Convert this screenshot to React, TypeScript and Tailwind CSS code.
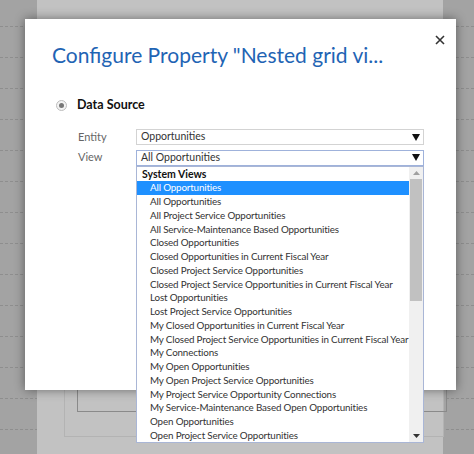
import React from "react"

const views = [
  "All Opportunities",
  "All Project Service Opportunities",
  "All Service-Maintenance Based Opportunities",
  "Closed Opportunities",
  "Closed Opportunities in Current Fiscal Year",
  "Closed Project Service Opportunities",
  "Closed Project Service Opportunities in Current Fiscal Year",
  "Lost Opportunities",
  "Lost Project Service Opportunities",
  "My Closed Opportunities in Current Fiscal Year",
  "My Closed Project Service Opportunities in Current Fiscal Year",
  "My Connections",
  "My Open Opportunities",
  "My Open Project Service Opportunities",
  "My Project Service Opportunity Connections",
  "My Service-Maintenance Based Open Opportunities",
  "Open Opportunities",
  "Open Project Service Opportunities",
]

function Arrow() {
  return (
    <svg width="8" height="7" viewBox="0 0 8 7" className="shrink-0">
      <path d="M0 0 H8 L4 7 Z" fill="#111" />
    </svg>
  )
}

export default function App() {
  return (
    <div
      className="relative w-[474px] h-[454px] overflow-hidden bg-[#a3a3a3]"
      style={{ fontFamily: 'Lato, "Open Sans", sans-serif' }}
    >
      {/* background page */}
      <div className="absolute inset-0 flex flex-col gap-[30px] pt-[26px]">
        {[0, 1, 2, 3, 4, 5, 6, 7, 8, 9, 10, 11, 12, 13].map((i) => (
          <div key={i} className="border-t border-dashed border-[#8e8e8e]" />
        ))}
      </div>
      <div className="absolute top-0 bottom-0 left-[37px] w-[406px] bg-[#c2c2c2]">
        <div className="absolute left-[27px] top-[300px] w-[380px] h-[137px] border border-[#b3b3b3]" />
        <div className="absolute left-[40px] top-[300px] w-[370px] h-[112px] border border-[#8a8a8a]" />
      </div>

      {/* dialog */}
      <div className="absolute left-[25px] top-[19px] w-[431px] h-[371px] bg-white shadow-[0_0_10px_rgba(0,0,0,0.45)]">
        <button className="absolute right-[11px] top-[16px] text-[#333]">
          <svg width="10" height="10" viewBox="0 0 10 10">
            <path d="M1 1 L9 9 M9 1 L1 9" stroke="#333" strokeWidth="1.6" />
          </svg>
        </button>

        <h1 className="pl-[27px] pt-[21px] text-[21px] leading-[30px] text-[#1f64b4]">
          Configure Property "Nested grid vi...
        </h1>

        <div className="mt-[26px] pl-[31px] flex items-center gap-[10px]">
          <span className="w-[11px] h-[11px] rounded-full border border-[#bdbdbd] bg-[#f3f3f3] flex items-center justify-center">
            <span className="w-[5px] h-[5px] rounded-full bg-[#777]" />
          </span>
          <span className="text-[12.5px] font-bold text-[#111]">Data Source</span>
        </div>

        <div className="mt-[14px] pl-[53px] pr-[32px] flex flex-col gap-[4px]">
          <div className="flex items-center">
            <span className="w-[58px] text-[11px] text-[#666]">Entity</span>
            <div className="flex-1 h-[16px] border border-[#d3d3d3] flex items-center justify-between pl-[4px] pr-[3px]">
              <span className="text-[10.5px] text-[#333]">Opportunities</span>
              <Arrow />
            </div>
          </div>
          <div className="flex items-center">
            <span className="w-[58px] text-[11px] text-[#666]">View</span>
            <div className="relative flex-1 h-[16px] border border-[#9fb2db] flex items-center justify-between pl-[4px] pr-[3px]">
              <span className="text-[10.5px] text-[#333]">All Opportunities</span>
              <Arrow />

              {/* open list */}
              <div className="absolute left-[-1px] right-[-1px] top-[15px] h-[277px] bg-white border border-[#a9b6d6] flex z-10">
                <div className="flex-1 min-w-0 overflow-hidden flex flex-col pt-[1px] text-[9.8px] tracking-[-0.15px] leading-[13.75px] text-[#333]">
                  <div className="pl-[5px] font-bold text-[#111] text-[10.5px] tracking-normal">System Views</div>
                  <div className="pl-[13px] bg-[#1e90ff] text-white">All Opportunities</div>
                  {views.map((v) => (
                    <div key={v} className="pl-[13px] whitespace-nowrap">{v}</div>
                  ))}
                </div>
                <div className="w-[14px] shrink-0 bg-[#f0f0f0] flex flex-col items-center py-[4px]">
                  <svg width="7" height="4" viewBox="0 0 7 4"><path d="M0 4 L3.5 0 L7 4 Z" fill="#a0a0a0" /></svg>
                  <div className="mt-[4px] w-[12px] h-[122px] bg-[#c1c1c1]" />
                  <div className="flex-1" />
                  <svg width="7" height="4" viewBox="0 0 7 4"><path d="M0 0 L3.5 4 L7 0 Z" fill="#333" /></svg>
                </div>
              </div>
            </div>
          </div>
        </div>
      </div>
    </div>
  )
}
